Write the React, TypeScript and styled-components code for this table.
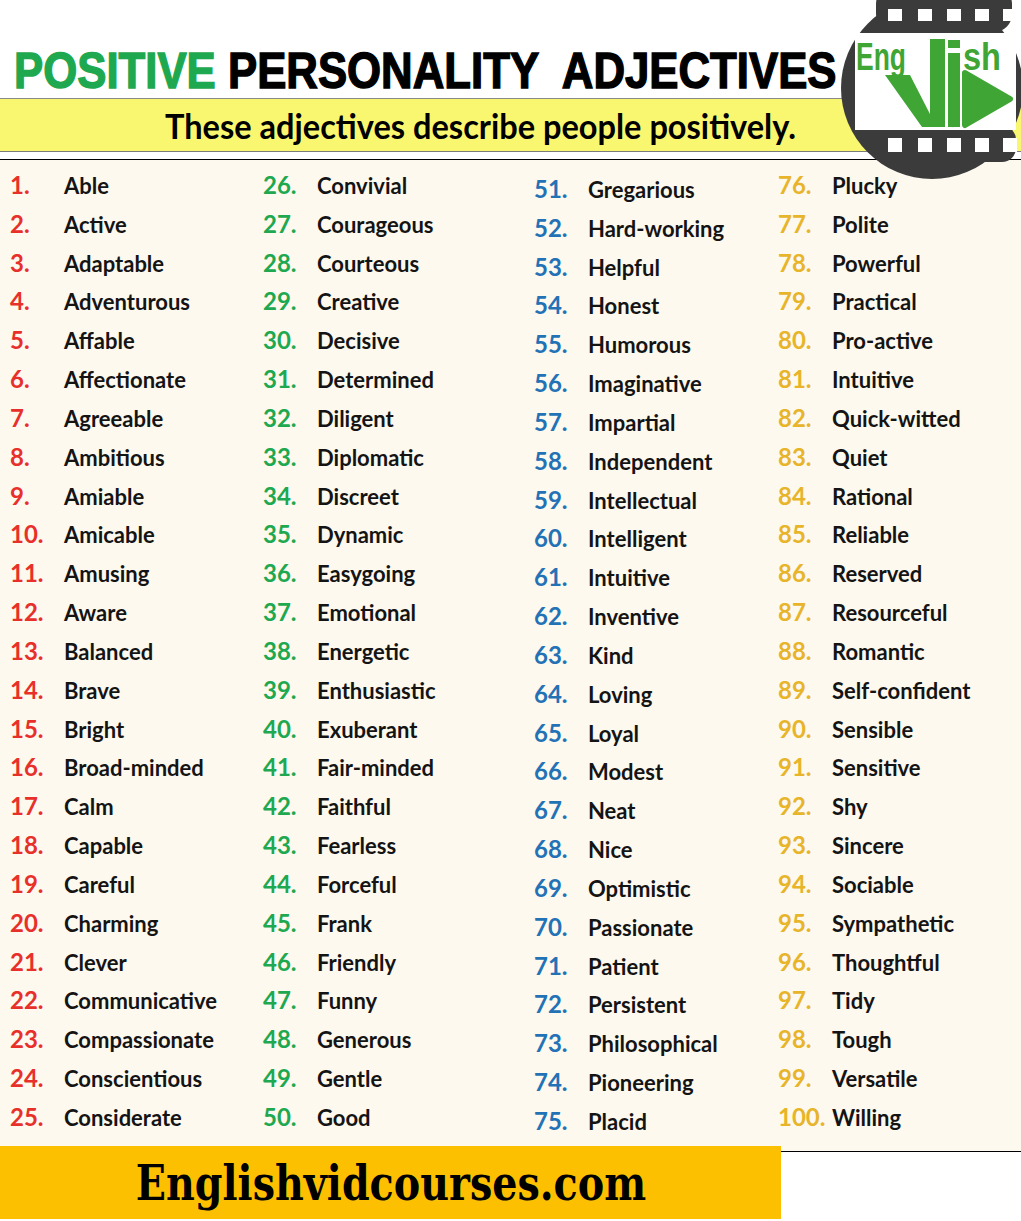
import React from 'react';
import styled, {createGlobalStyle} from 'styled-components';

const GlobalStyle = createGlobalStyle`
  html, body {
    margin: 0;
    padding: 0;
    background: #ffffff;
  }
  body {
    width: 1021px;
    height: 1221px;
    overflow: hidden;
    font-family: "Lato", "Liberation Sans", sans-serif;
  }
`;

const colors = {
    green: '#1ea84f',
    red: '#e8302a',
    blue: '#2372b6',
    gold: '#e7b42a',
    cream: '#fdf9ef',
    band: '#f9f76f',
    footer: '#fdc000',
    logoDark: '#3b3b3b',
    logoGreen: '#3fa535',
};

const columns: { color: string; shift: number; words: string[] }[] = [
    {
        color: colors.red, shift: 0, words: [
            'Able', 'Active', 'Adaptable', 'Adventurous', 'Affable', 'Affectionate', 'Agreeable', 'Ambitious',
            'Amiable', 'Amicable', 'Amusing', 'Aware', 'Balanced', 'Brave', 'Bright', 'Broad-minded', 'Calm',
            'Capable', 'Careful', 'Charming', 'Clever', 'Communicative', 'Compassionate', 'Conscientious', 'Considerate',
        ]
    },
    {
        color: colors.green, shift: 0, words: [
            'Convivial', 'Courageous', 'Courteous', 'Creative', 'Decisive', 'Determined', 'Diligent', 'Diplomatic',
            'Discreet', 'Dynamic', 'Easygoing', 'Emotional', 'Energetic', 'Enthusiastic', 'Exuberant', 'Fair-minded',
            'Faithful', 'Fearless', 'Forceful', 'Frank', 'Friendly', 'Funny', 'Generous', 'Gentle', 'Good',
        ]
    },
    {
        color: colors.blue, shift: 4, words: [
            'Gregarious', 'Hard-working', 'Helpful', 'Honest', 'Humorous', 'Imaginative', 'Impartial', 'Independent',
            'Intellectual', 'Intelligent', 'Intuitive', 'Inventive', 'Kind', 'Loving', 'Loyal', 'Modest', 'Neat',
            'Nice', 'Optimistic', 'Passionate', 'Patient', 'Persistent', 'Philosophical', 'Pioneering', 'Placid',
        ]
    },
    {
        color: colors.gold, shift: 0, words: [
            'Plucky', 'Polite', 'Powerful', 'Practical', 'Pro-active', 'Intuitive', 'Quick-witted', 'Quiet',
            'Rational', 'Reliable', 'Reserved', 'Resourceful', 'Romantic', 'Self-confident', 'Sensible', 'Sensitive',
            'Shy', 'Sincere', 'Sociable', 'Sympathetic', 'Thoughtful', 'Tidy', 'Tough', 'Versatile', 'Willing',
        ]
    },
];

// film-reel logo, drawn over the top-right corner of the header
const Logo = () => (
    <LogoSvg width="181" height="182" viewBox="0 0 181 182">
        <circle cx="92" cy="88" r="91" fill={colors.logoDark}/>
        <rect x="36" y="-14" width="136" height="46" rx="18" fill={colors.logoDark}/>
        <rect x="38" y="126" width="138" height="36" rx="14" fill={colors.logoDark}/>
        {[48, 78, 107, 135, 163].map(x => (
            <React.Fragment key={x}>
                <rect x={x} y="9" width="14" height="12" fill="#fff"/>
                <rect x={x} y="138" width="14" height="14" fill="#fff"/>
            </React.Fragment>
        ))}
        <rect x="15" y="33" width="161" height="97" fill="#fff"/>
        <text x="16" y="70" fontFamily="Liberation Sans, sans-serif" fontWeight="700" fontSize="38"
              textLength="50" lengthAdjust="spacingAndGlyphs" fill={colors.logoGreen}>Eng</text>
        <text x="123" y="70" fontFamily="Liberation Sans, sans-serif" fontWeight="700" fontSize="38"
              textLength="38" lengthAdjust="spacingAndGlyphs" fill={colors.logoGreen}>sh</text>
        <polygon points="45,75 70,75 92,118 92,127 82,127" fill={colors.logoGreen}/>
        <rect x="90" y="39" width="15" height="88" fill={colors.logoGreen}/>
        <rect x="108" y="40" width="12" height="8" fill={colors.logoGreen}/>
        <rect x="108" y="53" width="12" height="74" fill={colors.logoGreen}/>
        <polygon points="125,73 170,99 125,125" fill={colors.logoGreen} stroke={colors.logoGreen}
                 strokeWidth="6" strokeLinejoin="round"/>
    </LogoSvg>
);

export default function App() {
    let n = 0;
    return (
        <Page>
            <GlobalStyle/>
            <TitleBar>
                <Title>
                    <Accent>POSITIVE</Accent> PERSONALITY&nbsp; ADJECTIVES
                </Title>
            </TitleBar>
            <Band>
                <Subtitle>These adjectives describe people positively.</Subtitle>
            </Band>
            <Content>
                {columns.map(col => (
                    <Column key={col.color} shift={col.shift}>
                        {col.words.map(word => {
                            n += 1;
                            return (
                                <Row key={n}>
                                    <Num color={col.color}>{n}.</Num>
                                    <Word>{word}</Word>
                                </Row>
                            );
                        })}
                    </Column>
                ))}
            </Content>
            <FooterRow>
                <Footer>
                    <FooterText>Englishvidcourses.com</FooterText>
                </Footer>
                <FooterRest/>
            </FooterRow>
            <Logo/>
        </Page>
    );
}

const Page = styled.div`
  position: relative;
  width: 1021px;
  height: 1221px;
  overflow: hidden;
  background: #fff;
`;

const LogoSvg = styled.svg`
  position: absolute;
  left: 840px;
  top: 0;
`;

const TitleBar = styled.header`
  height: 99px;
  box-sizing: border-box;
  padding: 46px 0 0 14px;
  border-bottom: 1px solid #8a8a8a;
`;

const Title = styled.h1`
  margin: 0;
  display: inline-block;
  white-space: nowrap;
  font-family: "Liberation Sans", Arial, sans-serif;
  font-weight: 700;
  font-size: 50px;
  line-height: 1;
  color: #000;
  transform: scaleX(0.875);
  transform-origin: left top;
  -webkit-text-stroke: 1.4px #000;
`;

const Accent = styled.span`
  color: ${colors.green};
  -webkit-text-stroke: 1.4px ${colors.green};
`;

const Band = styled.div`
  height: 53px;
  box-sizing: border-box;
  background: ${colors.band};
  border-bottom: 1px solid #7c7c7c;
  padding-left: 165px;
  margin-bottom: 7px;
`;

const Subtitle = styled.p`
  margin: 0;
  display: inline-block;
  white-space: nowrap;
  font-family: "Lato", sans-serif;
  font-weight: 700;
  font-size: 34px;
  line-height: 54px;
  color: #000;
  transform: scaleX(0.957);
  transform-origin: left center;
`;

const Content = styled.main`
  display: grid;
  grid-template-columns: 253px 271px 244px 1fr;
  padding: 6px 0 0 10px;
  height: 987px;
  box-sizing: border-box;
  background: ${colors.cream};
  border-top: 1px solid #000;
`;

const Column = styled.div<{ shift: number }>`
  display: flex;
  flex-direction: column;
  margin-top: ${props => props.shift}px;
`;

const Row = styled.div`
  display: flex;
  align-items: baseline;
  height: 38.83px;
  line-height: 38.83px;
  white-space: nowrap;
`;

const Num = styled.span<{ color: string }>`
  width: 54px;
  flex-shrink: 0;
  font-family: "Lato", sans-serif;
  font-weight: 700;
  font-size: 24px;
  color: ${props => props.color};
`;

const Word = styled.span`
  font-family: "Lato", sans-serif;
  font-weight: 700;
  font-size: 22px;
  color: #141414;
`;

const FooterRow = styled.footer`
  display: flex;
  height: 73px;
`;

const Footer = styled.div`
  width: 781px;
  background: ${colors.footer};
  display: flex;
  justify-content: center;
  align-items: center;
`;

const FooterRest = styled.div`
  flex: 1;
  border-top: 5px solid ${colors.cream};
  box-shadow: inset 0 1px 0 #000;
`;

const FooterText = styled.span`
  display: inline-block;
  white-space: nowrap;
  font-family: "DejaVu Serif", "Liberation Serif", serif;
  font-weight: 700;
  font-size: 48px;
  line-height: 1;
  color: #000;
  transform: scaleX(0.826);
`;
